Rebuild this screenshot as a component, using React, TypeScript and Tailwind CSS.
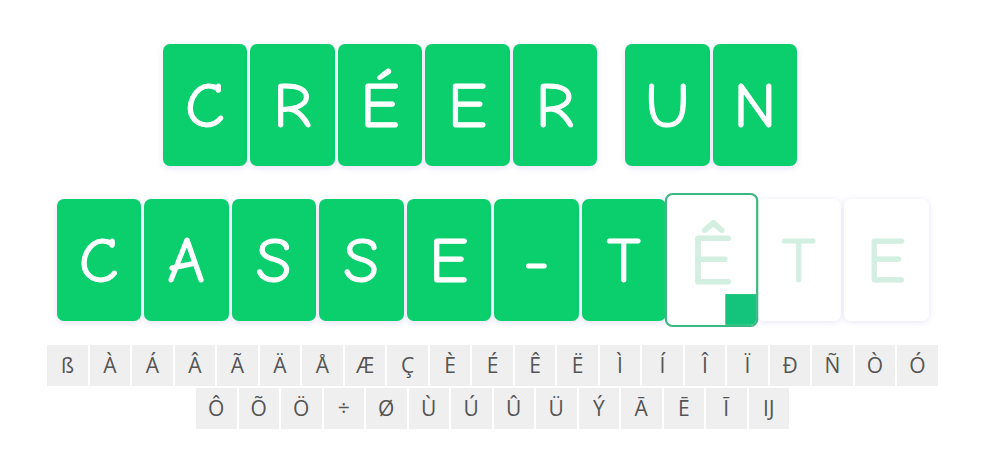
import React from "react"

const ROW1 = ["C", "R", "É", "E", "R", " ", "U", "N", " "]
const ROW2 = ["C", "A", "S", "S", "E", "-", "T", "Ê", "T", "E"]
const FILLED = 7 // letters of row 2 already typed
const ACTIVE = 7

const KEYS1 = ["ß", "À", "Á", "Â", "Ã", "Ä", "Å", "Æ", "Ç", "È", "É", "Ê", "Ë", "Ì", "Í", "Î", "Ï", "Đ", "Ñ", "Ò", "Ó"]
const KEYS2 = ["Ô", "Õ", "Ö", "÷", "Ø", "Ù", "Ú", "Û", "Ü", "Ý", "Ā", "Ē", "Ī", "Ĳ"]

const tileFont = { fontFamily: '"Comic Sans MS", "Comic Neue", "Noto Sans", sans-serif' }

function Tile({ ch, state }: { ch: string; state: "done" | "active" | "empty" }) {
  if (ch === " ") return <div className="h-[122px] w-[22px]" />

  if (state === "done") {
    return (
      <div
        className="flex h-[122px] w-[84.5px] items-center justify-center rounded-[7px] bg-[#0bce6d] pt-[2px] text-[65px] leading-none text-white shadow-[0_2px_6px_rgba(110,100,200,0.18)] [-webkit-text-stroke:1px_white]"
        style={tileFont}
      >
        {ch}
      </div>
    )
  }

  if (state === "active") {
    return (
      <div
        className="relative z-10 flex h-[122px] w-[84.5px] scale-110 items-center justify-center overflow-hidden rounded-[7px] border-2 border-[#3db883] bg-white pt-[2px] text-[65px] leading-none text-[#d3efe1] [-webkit-text-stroke:1px_#d3efe1]"
        style={tileFont}
      >
        {ch}
        {/* cursor block */}
        <span className="absolute bottom-0 right-0 h-[28px] w-[28px] bg-[#14c47c]" />
      </div>
    )
  }

  return (
    <div
      className="flex h-[122px] w-[84.5px] items-center justify-center rounded-[7px] bg-white pt-[2px] text-[65px] leading-none text-[#d3efe1] shadow-[0_1px_6px_rgba(120,110,210,0.18)] [-webkit-text-stroke:1px_#d3efe1]"
      style={tileFont}
    >
      {ch}
    </div>
  )
}

function Key({ ch }: { ch: string }) {
  return (
    <button className="flex h-[41px] w-[40.5px] items-center justify-center bg-[#efefef] text-[21px] text-[#555]">
      {ch}
    </button>
  )
}

export default function App() {
  return (
    <div className="min-h-[463px] w-full bg-white">
      <div className="flex w-[985px] flex-col items-center pt-[44px]">
        {/* Puzzle */}
        <div className="flex gap-[3px]">
          {ROW1.map((c, i) => (
            <Tile key={i} ch={c} state="done" />
          ))}
        </div>
        <div className="mt-[33px] flex gap-[3px]">
          {ROW2.map((c, i) => (
            <Tile key={i} ch={c} state={i < FILLED ? "done" : i === ACTIVE ? "active" : "empty"} />
          ))}
        </div>

        {/* Accent keyboard */}
        <div
          className="mt-[24px] flex flex-col items-center gap-[2px]"
          style={{ fontFamily: '"Open Sans", "Noto Sans", sans-serif' }}
        >
          <div className="flex gap-[2px]">
            {KEYS1.map((k) => (
              <Key key={k} ch={k} />
            ))}
          </div>
          <div className="flex gap-[2px]">
            {KEYS2.map((k) => (
              <Key key={k} ch={k} />
            ))}
          </div>
        </div>
      </div>
    </div>
  )
}
